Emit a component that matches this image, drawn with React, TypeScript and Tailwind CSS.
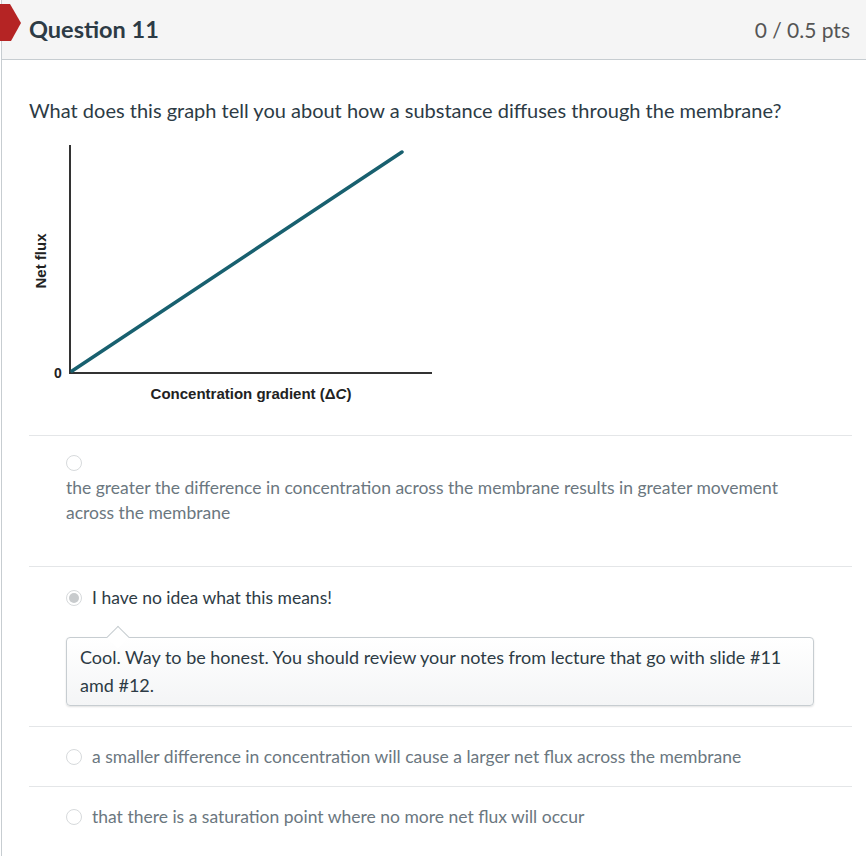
import React from "react";

const font = { fontFamily: "Lato, 'Open Sans', sans-serif" };

function Radio({ checked }: { checked?: boolean }) {
	return (
		<span className="flex h-[16px] w-[16px] shrink-0 items-center justify-center rounded-full border border-[#d7dadc] bg-white">
			{checked && <span className="h-[10px] w-[10px] rounded-full bg-[#c8cbcd]" />}
		</span>
	);
}

function Graph() {
	return (
		<svg width="420" height="272" viewBox="0 0 420 272" className="mt-[14px] block">
			<line x1="41" y1="7" x2="41" y2="236" stroke="#333" strokeWidth="2" />
			<line x1="40" y1="235" x2="403" y2="235" stroke="#333" strokeWidth="2" />
			<line x1="43" y1="233" x2="373" y2="14" stroke="#18606f" strokeWidth="3.5" strokeLinecap="round" />
			<text x="29" y="240" textAnchor="middle" fontFamily="'Liberation Sans', Arial, sans-serif" fontWeight="bold" fontSize="14" fill="#222">
				0
			</text>
			<text
				x="17"
				y="123"
				textAnchor="middle"
				transform="rotate(-90 17 123)"
				fontFamily="'Liberation Sans', Arial, sans-serif"
				fontWeight="bold"
				fontSize="15"
				fill="#222"
			>
				Net flux
			</text>
			<text x="222" y="261" textAnchor="middle" fontFamily="'Liberation Sans', Arial, sans-serif" fontWeight="bold" fontSize="15" fill="#222">
				Concentration gradient (Δ<tspan fontStyle="italic">C</tspan>)
			</text>
		</svg>
	);
}

export default function App() {
	return (
		<div className="relative min-h-[856px] w-full bg-white" style={font}>
			<div className="ml-[1px] min-h-[856px] border-l border-[#c7cdd1]">
				<div className="flex h-[60px] items-center justify-between border-b border-[#c7cdd1] bg-[#f5f5f5] pl-[27px] pr-[16px]">
					<h2 className="text-[23.5px] font-bold text-[#2d3b45]">Question 11</h2>
					<span className="text-[21px] text-[#555]">0 / 0.5 pts</span>
				</div>

				<div className="pl-[27px] pr-[14px]">
					<p className="mt-[36px] text-[20px] leading-[28px] text-[#2d3b45]">
						What does this graph tell you about how a substance diffuses through the membrane?
					</p>
					<Graph />

					<div className="mt-[25px] border-t border-[#e4e6e8] pb-[41px] pl-[37px] pr-[60px] pt-[19px]">
						<Radio />
						<p className="mt-[4px] text-[17.5px] leading-[25px] text-[#6b7780]">
							the greater the difference in concentration across the membrane results in greater movement across the membrane
						</p>
					</div>

					<div className="border-t border-[#e4e6e8] pb-[20px] pl-[37px] pt-[18px]">
						<div className="flex items-center gap-[10px]">
							<Radio checked />
							<span className="text-[17.5px] leading-[25px] text-[#2d3b45]">I have no idea what this means!</span>
						</div>
						<div className="relative mr-[38px] mt-[27px] rounded-[4px] border border-[#c7cdd1] bg-gradient-to-b from-white to-[#f4f5f6] px-[13px] pb-[6px] pt-[5px] shadow-[0_1px_2px_rgba(0,0,0,0.12)]">
							<span className="absolute -top-[9px] left-[43px] h-[16px] w-[16px] rotate-45 border-l border-t border-[#c7cdd1] bg-white" />
							<p className="relative text-[18px] leading-[28px] text-[#2d3b45]">
								Cool. Way to be honest. You should review your notes from lecture that go with slide #11 amd #12.
							</p>
						</div>
					</div>

					<div className="flex items-center gap-[10px] border-t border-[#e4e6e8] pb-[17px] pl-[37px] pt-[17px]">
						<Radio />
						<span className="text-[17.5px] leading-[25px] text-[#6b7780]">
							a smaller difference in concentration will cause a larger net flux across the membrane
						</span>
					</div>

					<div className="flex items-center gap-[10px] border-t border-[#e4e6e8] pb-[17px] pl-[37px] pt-[17px]">
						<Radio />
						<span className="text-[17.5px] leading-[25px] text-[#6b7780]">
							that there is a saturation point where no more net flux will occur
						</span>
					</div>
				</div>
			</div>

			<svg width="22" height="40" viewBox="0 0 22 40" className="absolute left-0 top-[3px]">
				<polygon points="0,1 10,1 21,20 11,38 0,38" fill="#b52424" />
			</svg>
		</div>
	);
}
